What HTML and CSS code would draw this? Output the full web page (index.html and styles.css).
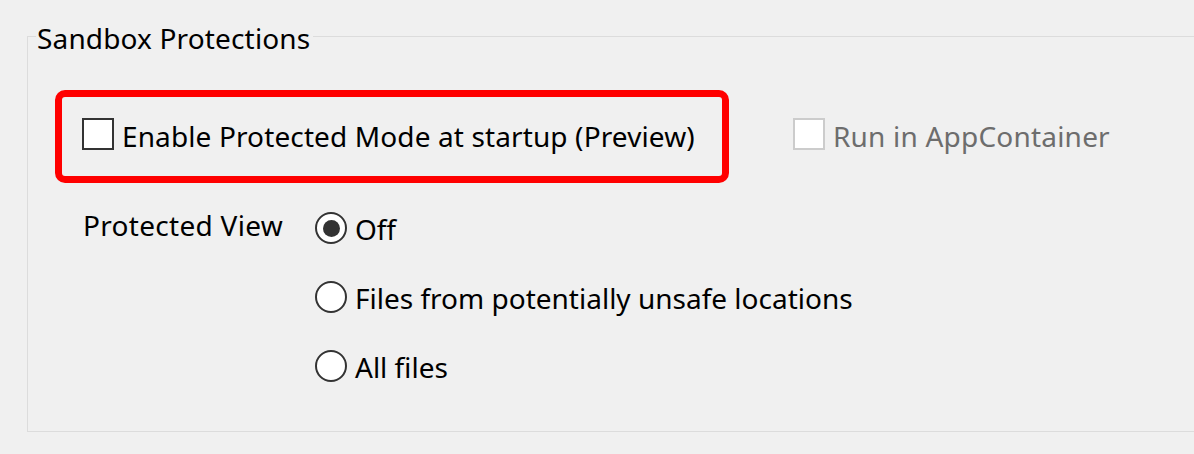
FILE: index.html
```html
<!DOCTYPE html>
<html lang="en">
<head>
<meta charset="utf-8">
<title>Sandbox Protections</title>
<link rel="stylesheet" href="styles.css">
</head>
<body>
<div class="page">
  <section class="group">
    <div class="group-title">Sandbox Protections</div>
    <div class="top-row">
      <div class="highlight">
        <span class="checkbox"></span>
        <span class="label">Enable Protected Mode at startup (Preview)</span>
      </div>
      <div class="option-disabled">
        <span class="checkbox checkbox-disabled"></span>
        <span class="label label-disabled">Run in AppContainer</span>
      </div>
    </div>
    <div class="pv">
      <div class="pv-label">Protected View</div>
      <div class="pv-options">
        <div class="radio-row">
          <span class="radio radio-checked"><span class="radio-dot"></span></span>
          <span class="label">Off</span>
        </div>
        <div class="radio-row">
          <span class="radio"></span>
          <span class="label">Files from potentially unsafe locations</span>
        </div>
        <div class="radio-row">
          <span class="radio"></span>
          <span class="label">All files</span>
        </div>
      </div>
    </div>
  </section>
</div>
</body>
</html>
```
FILE: styles.css
```css
html, body {
  margin: 0;
  padding: 0;
  background: #f0f0f0;
  overflow: hidden;
}

body {
  width: 1194px;
  height: 454px;
  font-family: "Noto Sans", "Open Sans", sans-serif;
  font-size: 28px;
  line-height: 38px;
  letter-spacing: 0.12px;
  color: #000;
}

.page {
  padding: 36px 0 0 27px;
}

.group {
  box-sizing: border-box;
  width: 1220px;
  height: 396px;
  border: 1px solid #dcdcdc;
  border-right: none;
}

.group-title {
  width: fit-content;
  margin: -18px 0 0 8px;
  padding: 0 3px 0 1px;
  background: #f0f0f0;
  letter-spacing: 0.15px;
}

.top-row {
  display: flex;
  align-items: flex-start;
  margin: 33px 0 0 27px;
}

.highlight {
  box-sizing: border-box;
  width: 674px;
  height: 93px;
  border: 7px solid #ff0000;
  border-radius: 10px;
  display: flex;
  align-items: flex-start;
  padding: 20px 0 0 20px;
}

.checkbox {
  box-sizing: border-box;
  flex: none;
  width: 32px;
  height: 32px;
  margin-top: 1px;
  background: #fff;
  border: 2px solid #333;
}

.checkbox-disabled {
  border-color: #cccccc;
}

.highlight .label {
  margin-left: 8px;
}

.option-disabled {
  display: flex;
  align-items: flex-start;
  margin: 27px 0 0 64px;
}

.option-disabled .label {
  margin-left: 8px;
  letter-spacing: 0.2px;
}

.label-disabled {
  color: #6d6d6d;
}

.pv {
  display: grid;
  grid-template-columns: 235px auto;
  margin: 23px 0 0 53px;
}

.pv-label {
  margin-left: 2px;
  letter-spacing: 0.3px;
}

.pv-options {
  display: flex;
  flex-direction: column;
  gap: 31px;
  margin: 4px 0 0 -1px;
  letter-spacing: 0;
}

.radio-row {
  display: flex;
  align-items: center;
  gap: 8px;
}

.radio {
  box-sizing: border-box;
  flex: none;
  width: 32px;
  height: 32px;
  margin-bottom: 2px;
  border: 2px solid #333;
  border-radius: 50%;
  background: #fff;
  display: flex;
  align-items: center;
  justify-content: center;
}

.radio-dot {
  width: 17px;
  height: 17px;
  border-radius: 50%;
  background: #333;
}
```
